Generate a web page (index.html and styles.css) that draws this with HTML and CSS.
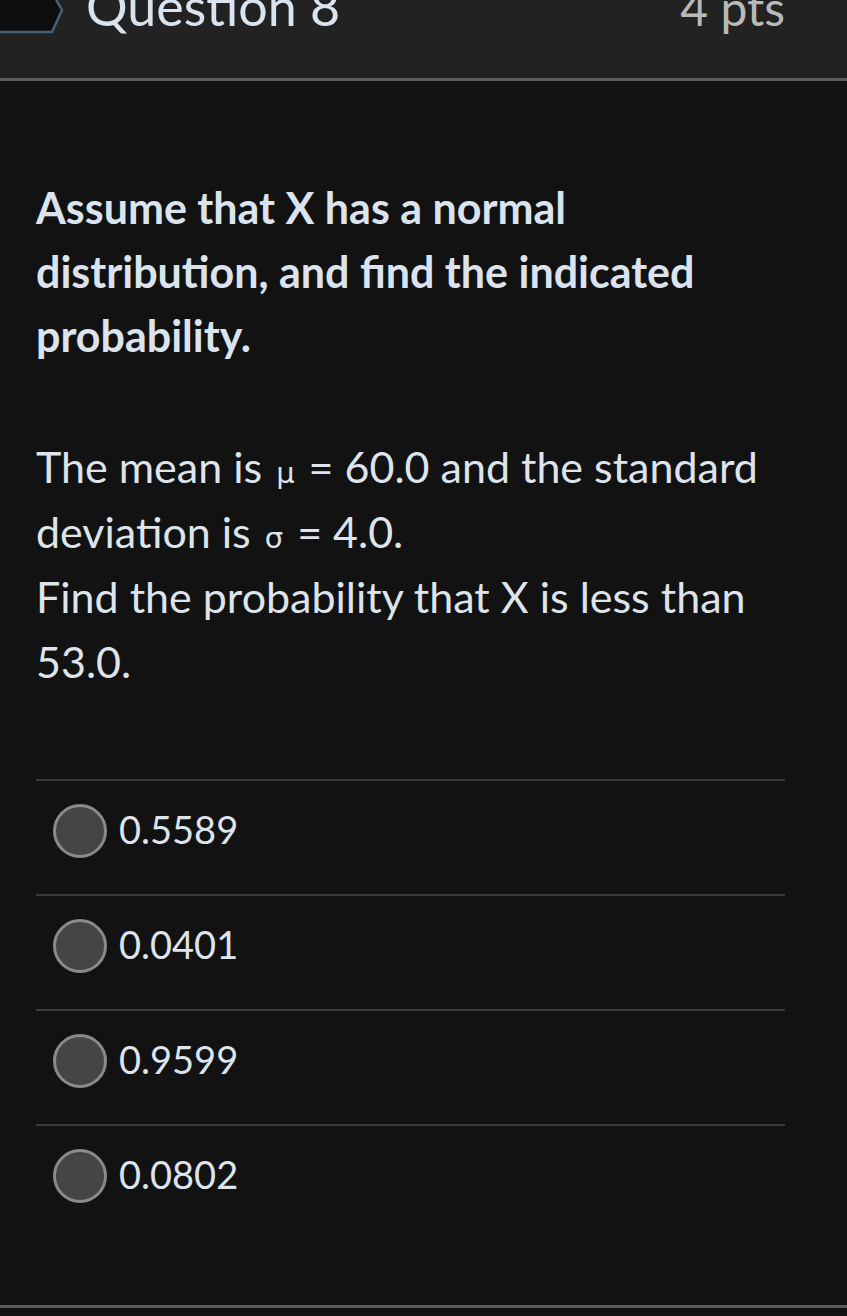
FILE: index.html
```html
<!DOCTYPE html>
<html>
<head>
<meta charset="utf-8">
<link rel="stylesheet" href="styles.css">
</head>
<body>
<div class="page">
  <header class="qhead">
    <div class="qicon">
      <svg width="64" height="36" viewBox="0 0 64 36">
        <path d="M-4 -4 L54 -4 L62 10 L52 32 L-4 32 Z" fill="#0e0e0e" stroke="#46627a" stroke-width="2.5"/>
      </svg>
    </div>
    <div class="qtitle">Question 8</div>
    <div class="qpts">4 pts</div>
  </header>
  <main class="qbody">
    <p class="lead">Assume that X has a normal distribution, and find the indicated probability.</p>
    <p class="text">The mean is <span class="sym mu">μ</span> = 60.0 and the standard deviation is <span class="sym sigma">σ</span> = 4.0.<br>Find the probability that X is less than 53.0.</p>
    <ul class="answers">
      <li class="answer"><span class="radio"></span><span class="val">0.5589</span></li>
      <li class="answer"><span class="radio"></span><span class="val">0.0401</span></li>
      <li class="answer"><span class="radio"></span><span class="val">0.9599</span></li>
      <li class="answer"><span class="radio"></span><span class="val">0.0802</span></li>
    </ul>
  </main>
  <div class="bottomline"></div>
</div>
</body>
</html>
```
FILE: styles.css
```css
html, body {
  margin: 0;
  padding: 0;
  background: #121212;
}
body {
  font-family: Lato, "Open Sans", sans-serif;
  color: #dde4ec;
  width: 847px;
  height: 1316px;
  overflow: hidden;
}
.page {
  display: flex;
  flex-direction: column;
}
.qhead {
  height: 78px;
  background: #222222;
  border-bottom: 3px solid #5c5c5c;
  display: flex;
  align-items: flex-start;
  overflow: hidden;
}
.qicon {
  width: 64px;
  height: 36px;
  flex: none;
}
.qicon svg { display: block; }
.qtitle {
  margin-left: 22px;
  font-size: 52px;
  line-height: 52px;
  margin-top: -20px;
  color: #d9e4ee;
  flex: 1;
}
.qpts {
  font-size: 48px;
  line-height: 48px;
  margin-top: -16px;
  color: #b9b9b9;
  margin-right: 62px;
}
.qbody {
  padding: 95px 50px 0 36px;
}
.lead {
  margin: 0;
  font-weight: 700;
  font-size: 43px;
  line-height: 64px;
  color: #dbe4ee;
}
.text {
  margin: 66px 0 0;
  font-size: 43px;
  line-height: 65px;
  color: #dde4ec;
}
.sym {
  font-family: "DejaVu Sans", sans-serif;
  font-size: 29px;
  display: inline-block;
  line-height: 1;
  margin: 0 3px;
}
.answers {
  list-style: none;
  margin: 85px 0 0;
  padding: 0;
  width: 749px;
}
.answer {
  border-top: 2px solid #3a3a3a;
  height: 113px;
  box-sizing: content-box;
  display: flex;
  align-items: flex-start;
  padding-left: 17px;
  gap: 12px;
}
.radio {
  width: 48px;
  height: 48px;
  border-radius: 50%;
  background: #454545;
  border: 3px solid #8a8a8a;
  flex: none;
  margin-top: 23px;
}
.val {
  font-size: 38px;
  line-height: 54px;
  color: #dde4ec;
  margin-top: 21px;
}
.bottomline {
  margin-top: 66px;
  height: 3px;
  background: #5c5c5c;
}
```
